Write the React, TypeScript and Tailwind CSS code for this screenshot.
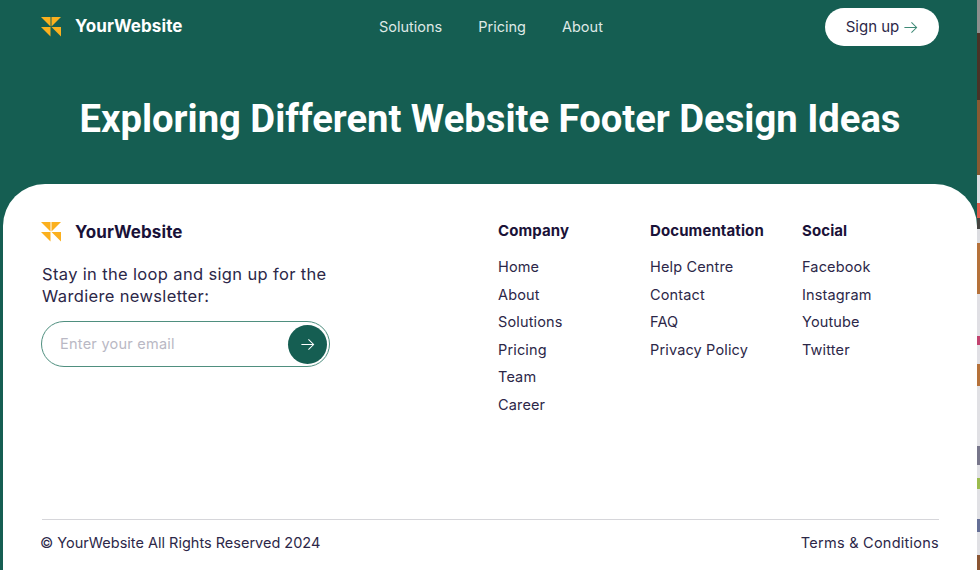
const Logo = ({ color = "#fbb01e" }: { color?: string }) => (
  <svg width="20" height="20" viewBox="0 0 20 20" fill={color} className="shrink-0">
    <polygon points="0,0 9.5,0 9.5,9.5" />
    <polygon points="10.5,0 20,0 10.5,9.5" />
    <polygon points="0,10 9.5,10 9.5,19.5" />
    <polygon points="10.5,10 20,10 20,19.5" />
  </svg>
);

const Arrow = ({ className }: { className: string }) => (
  <svg viewBox="0 0 16 16" fill="none" stroke="currentColor" strokeWidth="1.1" className={className}>
    <path d="M1.5 8h13M9 2.5 14.5 8 9 13.5" />
  </svg>
);

const columns = [
  { title: "Company", links: ["Home", "About", "Solutions", "Pricing", "Team", "Career"] },
  { title: "Documentation", links: ["Help Centre", "Contact", "FAQ", "Privacy Policy"] },
  { title: "Social", links: ["Facebook", "Instagram", "Youtube", "Twitter"] },
];

const strip: [number, string][] = [
  [33, "#8f8f8d"], [67, "#4a3226"], [75, "#8a5a32"], [28, "#dcdce0"], [15, "#e05a4c"], [11, "#45423f"],
  [14, "#dcdce0"], [51, "#b5713a"], [42, "#e0dfe4"], [9, "#c2436f"], [19, "#e0dfe4"], [22, "#b5713a"],
  [60, "#e0e0e4"], [19, "#77768a"], [13, "#e0e0e4"], [11, "#9bbb4e"], [30, "#e0e0e4"], [13, "#656f96"],
  [23, "#e0e0e4"], [24, "#8a5533"],
];

export default function App() {
  return (
    <div className="flex w-[980px] h-[570px] overflow-hidden font-['Inter',sans-serif] text-[#2c2748]">
      <div className="flex flex-col w-[977px] bg-[#155e52]">
        <header className="flex items-center h-[54px] pl-[41px] pr-[38px] text-white">
          <div className="flex items-center w-[338px] gap-[14px]">
            <Logo />
            <span className="font-bold text-[17px] tracking-[0.1px]">YourWebsite</span>
          </div>
          <nav className="flex gap-[36px] text-[14.5px] text-[#dfe9e6]">
            <span>Solutions</span>
            <span>Pricing</span>
            <span>About</span>
          </nav>
          <button className="ml-auto flex items-center justify-center gap-[4px] w-[114px] h-[38px] rounded-full bg-white text-[15px] text-[#2c2748]">
            Sign up
            <Arrow className="w-[15px] h-[15px] text-[#3f8a76]" />
          </button>
        </header>
        <h1 className="h-[130px] pt-[42px] pl-[3px] text-center font-['Roboto',sans-serif] font-bold text-[38.2px] leading-[46px] text-white">
          Exploring Different Website Footer Design Ideas
        </h1>
        <footer className="flex-1 flex flex-col ml-[3px] bg-white rounded-t-[42px] pl-[39px] pr-[38px]">
          <div className="flex flex-1 pt-[38px]">
            <div className="w-[456px]">
              <div className="flex items-center gap-[14px] h-[20px] -ml-[1px]">
                <Logo />
                <span className="pt-[2px] font-bold text-[17px] tracking-[0.1px] text-[#1a1238]">YourWebsite</span>
              </div>
              <p className="mt-[21px] w-[300px] text-[16.5px] leading-[22px] tracking-[0.35px]">
                Stay in the loop and sign up for the Wardiere newsletter:
              </p>
              <div className="mt-[14px] -ml-[1px] flex items-center justify-between w-[289px] h-[46px] rounded-full border border-[#4f8f7f] pl-[18px] pr-[2px]">
                <span className="text-[14.5px] tracking-[0.25px] text-[#b9b8c4]">Enter your email</span>
                <span className="flex items-center justify-center w-[39px] h-[39px] rounded-full bg-[#155e52] text-white">
                  <Arrow className="w-[15px] h-[15px]" />
                </span>
              </div>
            </div>
            <div className="grid grid-cols-[152px_152px_137px] content-start">
              {columns.map((c) => (
                <div key={c.title}>
                  <h3 className="font-bold text-[15px] leading-[18px] tracking-[0.1px] text-[#1a1238]">{c.title}</h3>
                  <ul className="mt-[17px] flex flex-col gap-[7.6px] text-[14.5px] leading-[20px] tracking-[0.15px]">
                    {c.links.map((l) => (
                      <li key={l}>{l}</li>
                    ))}
                  </ul>
                </div>
              ))}
            </div>
          </div>
          <div className="flex items-center justify-between h-[51px] pb-[5px] border-t border-[#d6d6da] text-[14.5px]">
            <span className="-ml-[2px]">© YourWebsite All Rights Reserved 2024</span>
            <span className="tracking-[0.25px]">Terms &amp; Conditions</span>
          </div>
        </footer>
      </div>
      <div className="flex flex-col w-[3px]">
        {strip.map(([h, c], i) => (
          <div key={i} className="w-full shrink-0" style={{ height: h, backgroundColor: c }} />
        ))}
      </div>
    </div>
  );
}
